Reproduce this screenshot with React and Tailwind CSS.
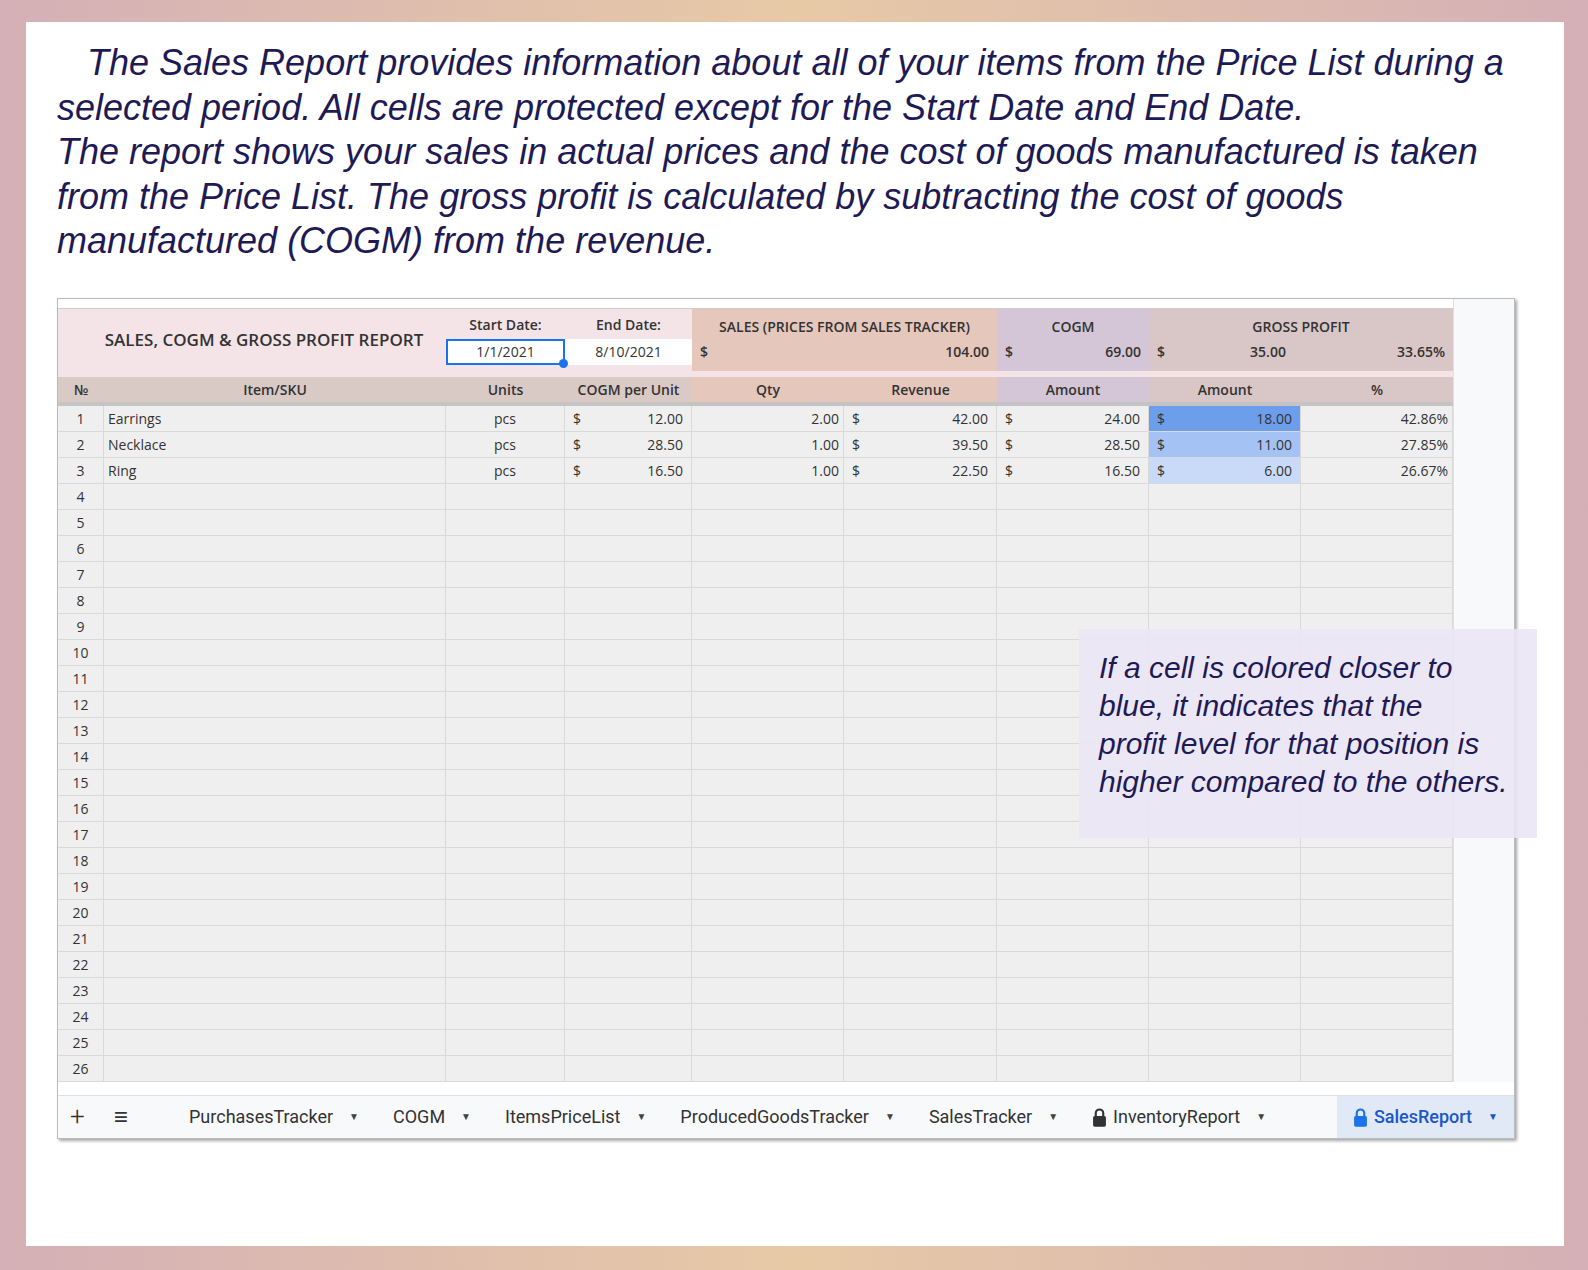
import React from "react";

const grid = "grid grid-cols-[46px_342px_119px_127px_152px_153px_152px_152px_152px]";
const rows = [
  ["1", "Earrings", "12.00", "2.00", "42.00", "24.00", "18.00", "42.86%", "bg-[#6d9eeb]"],
  ["2", "Necklace", "28.50", "1.00", "39.50", "28.50", "11.00", "27.85%", "bg-[#a4c2f4]"],
  ["3", "Ring", "16.50", "1.00", "22.50", "16.50", "6.00", "26.67%", "bg-[#c9daf8]"],
];

function Money({ v, cls = "" }) {
  return (
    <div className={"flex justify-between px-2 border-r border-[#d9d9d9] " + cls}>
      <span>$</span><span>{v}</span>
    </div>
  );
}

function Caret() {
  return <span className="text-[10px] ml-4 text-[#444]">▼</span>;
}
function Lock({ blue }) {
  return (
    <svg width="15" height="20" viewBox="0 0 14 18" className="mr-[6px]">
      <path d="M3.5 8V5.5a3.5 3.5 0 0 1 7 0V8" fill="none" stroke={blue ? "#1a73e8" : "#333"} strokeWidth="2" />
      <rect x="1" y="8" width="12" height="10" rx="1.5" fill={blue ? "#1a73e8" : "#333"} />
    </svg>
  );
}

export default function App() {
  const empty = Array.from({ length: 23 }, (_, i) => i + 4);
  return (
    <div className="w-[1588px] h-[1270px] bg-[linear-gradient(90deg,#d4b0b6,#e8c9a6_50%,#d4b0b6)] p-[22px_24px_24px_26px]">
      <div className="relative w-full h-full bg-white">
        <div className="pl-[31px] pt-[19px] pr-[40px] text-[36px] leading-[44.5px] italic text-[#1e1a55] font-[family-name:Liberation_Sans,Arial,sans-serif]">
          <p>&nbsp;&nbsp;&nbsp;The Sales Report provides information about all of your items from the Price List during a selected period. All cells are protected except for the Start Date and End Date.</p>
          <p>The report shows your sales in actual prices and the cost of goods manufactured is taken from the Price List. The gross profit is calculated by subtracting the cost of goods manufactured (COGM) from the revenue.</p>
        </div>

        <div className="ml-[31px] mt-[34px] w-[1458px] border border-[#bbb] shadow-[2px_2px_3px_rgba(0,0,0,0.35)] font-[family-name:Open_Sans,sans-serif] text-[14px] text-[#333] bg-[#f8f9fa]">
          <div className="flex">
            <div className="w-[1395px] bg-[#efefef]">
              <div className="h-[10px] bg-white border-b border-[#ccc]" />
              <div className={grid + " bg-[#f4e4e7] h-[62px]"}>
                <div className="col-span-2 flex items-center justify-center font-semibold text-[17px] text-[#333] pl-6">SALES, COGM &amp; GROSS PROFIT REPORT</div>
                <div className="flex flex-col">
                  <div className="h-[30px] flex items-end justify-center font-semibold pb-1">Start Date:</div>
                  <div className="h-[26px] bg-white border-2 border-[#1a73e8] relative flex items-center justify-center">1/1/2021
                    <span className="absolute -right-[5px] -bottom-[5px] w-[9px] h-[9px] rounded-full bg-[#1a73e8]" /></div>
                </div>
                <div className="flex flex-col">
                  <div className="h-[30px] flex items-end justify-center font-semibold pb-1">End Date:</div>
                  <div className="h-[26px] bg-white flex items-center justify-center">8/10/2021</div>
                </div>
                <div className="col-span-2 bg-[#e5c7bc] flex flex-col pt-[5px]">
                  <div className="h-[25px] flex items-center justify-center font-semibold">SALES (PRICES FROM SALES TRACKER)</div>
                  <div className="h-[26px] flex justify-between items-center px-2 font-semibold"><span>$</span><span>104.00</span></div>
                </div>
                <div className="bg-[#d4c6d6] flex flex-col pt-[5px]">
                  <div className="h-[25px] flex items-center justify-center font-semibold">COGM</div>
                  <div className="h-[26px] flex justify-between items-center px-2 font-semibold"><span>$</span><span>69.00</span></div>
                </div>
                <div className="col-span-2 bg-[#d9c6c6] flex flex-col pt-[5px]">
                  <div className="h-[25px] flex items-center justify-center font-semibold">GROSS PROFIT</div>
                  <div className="h-[26px] flex items-center px-2 font-semibold"><span>$</span><span className="ml-auto mr-[26px]">35.00</span><span className="ml-auto">33.65%</span></div>
                </div>
              </div>
              <div className="h-[6px] bg-[#f4e4e7]" />
              <div className={grid + " h-[29px] font-semibold border-b-[4px] border-[#c4c4c4]"}>
                <div className="bg-[#d9cac6] flex items-center pl-4">№</div>
                <div className="bg-[#d9cac6] flex items-center justify-center">Item/SKU</div>
                <div className="bg-[#d9cac6] flex items-center justify-center">Units</div>
                <div className="bg-[#d9cac6] flex items-center justify-center">COGM per Unit</div>
                <div className="bg-[#e5c7bc] flex items-center justify-center">Qty</div>
                <div className="bg-[#e5c7bc] flex items-center justify-center">Revenue</div>
                <div className="bg-[#d4c6d6] flex items-center justify-center">Amount</div>
                <div className="bg-[#d9c6c6] flex items-center justify-center">Amount</div>
                <div className="bg-[#d9c6c6] flex items-center justify-center">%</div>
              </div>
              {rows.map((r) => (
                <div key={r[0]} className={grid + " h-[26px] leading-[25px] border-b border-[#d9d9d9]"}>
                  <div className="text-center border-r border-[#d9d9d9]">{r[0]}</div>
                  <div className="px-1 border-r border-[#d9d9d9]">{r[1]}</div>
                  <div className="text-center border-r border-[#d9d9d9]">pcs</div>
                  <Money v={r[2]} />
                  <div className="text-right px-1 border-r border-[#d9d9d9]">{r[3]}</div>
                  <Money v={r[4]} />
                  <Money v={r[5]} />
                  <Money v={r[6]} cls={r[8]} />
                  <div className="text-right px-1 border-r border-[#d9d9d9]">{r[7]}</div>
                </div>
              ))}
              {empty.map((n) => (
                <div key={n} className={grid + " h-[26px] leading-[25px] border-b border-[#d9d9d9]"}>
                  <div className="text-center border-r border-[#d9d9d9]">{n}</div>
                  {Array.from({ length: 8 }, (_, i) => <div key={i} className="border-r border-[#d9d9d9]" />)}
                </div>
              ))}
            </div>
            <div className="flex-1 bg-[#f8f9fa] border-l border-[#e0e0e0]" />
          </div>
          <div className="h-[14px] bg-white border-b border-[#e0e0e0]" />
          <div className="h-[42px] flex items-center bg-[#f8f9fa] text-[18px] text-[#333] font-[family-name:Roboto,sans-serif]">
            <span className="ml-[12px] text-[26px] font-light w-[44px]">+</span>
            <span className="text-[24px] w-[58px]">≡</span>
            <div className="flex items-center px-[17px]">PurchasesTracker<Caret /></div>
            <div className="flex items-center px-[17px]">COGM<Caret /></div>
            <div className="flex items-center px-[17px]">ItemsPriceList<Caret /></div>
            <div className="flex items-center px-[17px]">ProducedGoodsTracker<Caret /></div>
            <div className="flex items-center px-[17px]">SalesTracker<Caret /></div>
            <div className="flex items-center px-[17px]"><Lock />InventoryReport<Caret /></div>
            <div className="flex items-center px-[16px] h-full bg-[#e1e9f7] text-[#1a57c9] font-medium ml-auto"><Lock blue />SalesReport<span className="text-[10px] ml-4">▼</span></div>
          </div>
        </div>

        <div className="absolute left-[1053px] top-[607px] w-[458px] h-[209px] bg-[#ebe5f5]/90 pl-[20px] pt-[20px] text-[30px] leading-[38px] italic text-[#1e1a55] font-[family-name:Liberation_Sans,Arial,sans-serif] whitespace-nowrap">
          If a cell is colored closer to<br />blue, it indicates that the<br />profit level for that position is<br />higher compared to the others.
        </div>
      </div>
    </div>
  );
}
